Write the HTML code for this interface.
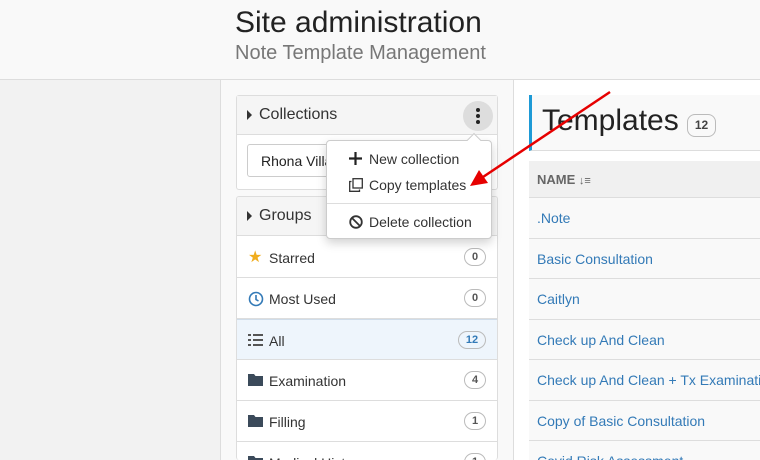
<!DOCTYPE html>
<html style="overflow:hidden;width:760px;height:460px"><head><meta charset="utf-8"><style>
*{box-sizing:border-box;margin:0;padding:0}
body{width:760px;height:460px;overflow:hidden;position:relative;background:#f2f2f2;font-family:"Liberation Sans",sans-serif;color:#333}
.abs{position:absolute}
.hdr{left:0;top:0;width:760px;height:80px;background:#f9f9f9;border-bottom:1px solid #ddd}
.side{left:220px;top:80px;width:294px;height:380px;background:#f9f9f9;border-left:1px solid #ddd;border-right:1px solid #ddd}
.main{left:514px;top:80px;width:246px;height:380px;background:#fff}
.panel{background:#fff;border:1px solid #ddd;border-radius:3px}
.ph{background:#f5f5f5;border-bottom:1px solid #ddd;height:39px;font-size:16px;padding:10px 0 0 22px;position:relative}
.ph:before{content:"";position:absolute;left:10px;top:14px;border-left:5px solid #333;border-top:5px solid transparent;border-bottom:5px solid transparent}
.row{position:absolute;left:0;width:260px;height:41px;border-bottom:1px solid #ddd;font-size:14px;padding:13px 0 0 32px}
.badge{position:absolute;right:11px;top:11px;width:22px;height:18px;border:1px solid #bbb;border-radius:9px;font-size:11px;font-weight:bold;text-align:center;line-height:16px;color:#555}
.ic{position:absolute;left:11px;top:13px}
.tr{position:absolute;left:529px;width:240px;background:#f9f9f9;border-bottom:1px solid #ddd;color:#337ab7;font-size:14px;padding:12px 0 0 8px;white-space:nowrap;overflow:hidden}
.menu{left:326px;top:140px;width:166px;height:99px;background:#fff;border:1px solid #ccc;border-radius:4px;box-shadow:0 4px 10px rgba(0,0,0,.18);font-size:14px}
.mi{position:absolute;left:42px}
</style></head><body>
<div class="abs hdr"></div>
<div class="abs" style="left:235px;top:6px;font-size:30px;color:#222">Site administration</div>
<div class="abs" style="left:235px;top:42px;font-size:20px;color:#777">Note Template Management</div>
<div class="abs side"></div>
<div class="abs main"></div>

<div class="abs panel" style="left:236px;top:95px;width:262px;height:95px">
 <div class="ph">Collections</div>
 <div class="abs" style="left:226px;top:5px;width:30px;height:30px;border-radius:15px;background:#ddd"></div>
 <div class="abs" style="left:239px;top:12px;width:4px;height:4px;border-radius:2px;background:#222;box-shadow:0 6px 0 #222,0 12px 0 #222"></div>
 <div class="abs" style="left:10px;top:48px;width:240px;height:33px;border:1px solid #ccc;border-radius:3px;font-size:14px;padding:8px 0 0 13px;color:#222">Rhona Villa</div>
</div>

<div class="abs panel" style="left:236px;top:196px;width:262px;height:264px;overflow:hidden;border-bottom:none">
 <div class="ph">Groups</div>
 <div class="row" style="top:40px"><span class="ic" style="color:#f0ad1e;font-size:16px;top:10px">★</span>Starred<span class="badge">0</span></div>
 <div class="row" style="top:81px"><svg class="ic" width="16" height="16" viewBox="0 0 16 16"><circle cx="8" cy="8" r="6.5" fill="none" stroke="#337ab7" stroke-width="1.6"/><path d="M8 4v4.5l2.5 1.5" fill="none" stroke="#337ab7" stroke-width="1.6"/></svg>Most Used<span class="badge">0</span></div>
 <div class="row" style="top:122px;background:#eef5fc;border-top:1px solid #cfdce9"><svg class="ic" width="15" height="14" viewBox="0 0 15 14"><g fill="#555"><rect x="0" y="1" width="3" height="2"/><rect x="0" y="6" width="3" height="2"/><rect x="0" y="11" width="3" height="2"/><rect x="5" y="1" width="10" height="2"/><rect x="5" y="6" width="10" height="2"/><rect x="5" y="11" width="10" height="2"/></g></svg>All<span class="badge" style="width:28px;color:#337ab7">12</span></div>
 <div class="row" style="top:163px"><svg class="ic" width="15" height="13" viewBox="0 0 15 13"><path d="M0 1h6l1.5 2H15v10H0z" fill="#3b4a5a"/></svg>Examination<span class="badge">4</span></div>
 <div class="row" style="top:204px"><svg class="ic" width="15" height="13" viewBox="0 0 15 13"><path d="M0 1h6l1.5 2H15v10H0z" fill="#3b4a5a"/></svg>Filling<span class="badge">1</span></div>
 <div class="row" style="top:245px"><svg class="ic" width="15" height="13" viewBox="0 0 15 13"><path d="M0 1h6l1.5 2H15v10H0z" fill="#3b4a5a"/></svg>Medical History<span class="badge">1</span></div>
</div>

<div class="abs menu">
 <div class="abs" style="left:142px;top:-6px;width:10px;height:10px;background:#fff;border-left:1px solid #ccc;border-top:1px solid #ccc;transform:rotate(45deg)"></div>
 <svg class="abs" style="left:22px;top:11px" width="13" height="13" viewBox="0 0 13 13"><path d="M6.5 0v13M0 6.5h13" stroke="#222" stroke-width="2.2"/></svg>
 <div class="mi" style="top:10px">New collection</div>
 <svg class="abs" style="left:22px;top:37px" width="14" height="14" viewBox="0 0 14 14"><rect x="4" y="0.7" width="9.3" height="9.3" fill="none" stroke="#333" stroke-width="1.3"/><path d="M2.5 3.5H.7v9.8h9.8v-1.8" fill="none" stroke="#333" stroke-width="1.3"/></svg>
 <div class="mi" style="top:36px">Copy templates</div>
 <div class="abs" style="left:0;top:62px;width:164px;border-top:1px solid #ddd"></div>
 <svg class="abs" style="left:22px;top:74px" width="14" height="14" viewBox="0 0 14 14"><circle cx="7" cy="7" r="5.8" fill="none" stroke="#333" stroke-width="1.8"/><path d="M3 3l8 8" stroke="#333" stroke-width="1.8"/></svg>
 <div class="mi" style="top:73px">Delete collection</div>
</div>

<div class="abs" style="left:529px;top:95px;width:231px;height:56px;background:#f9f9f9;border-bottom:1px solid #ddd;border-left:3px solid #1e9ad6"></div>
<div class="abs" style="left:542px;top:104px;font-size:30px;color:#222">Templates</div>
<div class="abs" style="left:687px;top:114px;width:29px;height:23px;border:1px solid #bbb;border-radius:8px;font-size:12px;font-weight:bold;text-align:center;line-height:21px;color:#444">12</div>
<div class="abs" style="left:529px;top:161px;width:231px;height:37px;background:#f0f0f0;border-bottom:1px solid #ddd;font-size:13px;font-weight:bold;color:#666;padding:11px 0 0 8px">NAME <span style="font-size:11px">↓≡</span></div>
<div class="tr" style="top:198px;height:41px">.Note</div>
<div class="tr" style="top:239px;height:40px">Basic Consultation</div>
<div class="tr" style="top:279px;height:41px">Caitlyn</div>
<div class="tr" style="top:320px;height:40px">Check up And Clean</div>
<div class="tr" style="top:360px;height:41px">Check up And Clean + Tx Examination</div>
<div class="tr" style="top:401px;height:40px">Copy of Basic Consultation</div>
<div class="tr" style="top:441px;height:40px">Covid Risk Assessment</div>

<svg class="abs" style="left:0;top:0" width="760" height="460"><path d="M610 92L483 177" stroke="#e60000" stroke-width="2.5"/><path d="M470 186L479 170L488 183z" fill="#e60000"/></svg>
</body></html>
